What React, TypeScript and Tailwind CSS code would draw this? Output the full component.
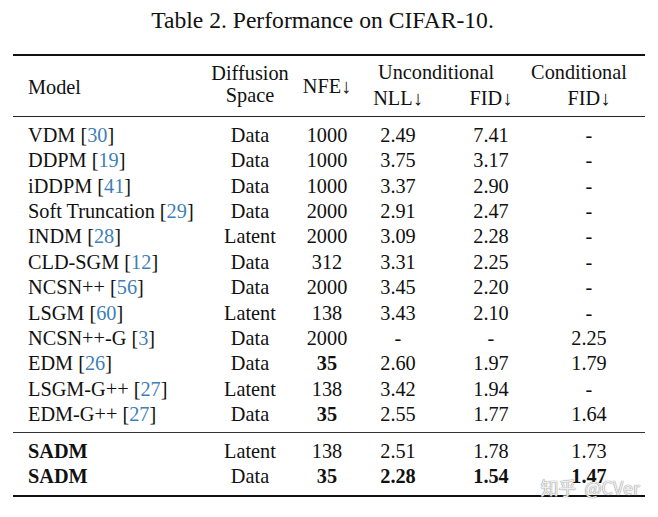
const ROWS: { name: string; ref: string; space: string; nfe: string; nfeBold?: boolean; nll: string; fid: string; cond: string }[] = [
  { name: "VDM", ref: "30", space: "Data", nfe: "1000", nll: "2.49", fid: "7.41", cond: "-" },
  { name: "DDPM", ref: "19", space: "Data", nfe: "1000", nll: "3.75", fid: "3.17", cond: "-" },
  { name: "iDDPM", ref: "41", space: "Data", nfe: "1000", nll: "3.37", fid: "2.90", cond: "-" },
  { name: "Soft Truncation", ref: "29", space: "Data", nfe: "2000", nll: "2.91", fid: "2.47", cond: "-" },
  { name: "INDM", ref: "28", space: "Latent", nfe: "2000", nll: "3.09", fid: "2.28", cond: "-" },
  { name: "CLD-SGM", ref: "12", space: "Data", nfe: "312", nll: "3.31", fid: "2.25", cond: "-" },
  { name: "NCSN++", ref: "56", space: "Data", nfe: "2000", nll: "3.45", fid: "2.20", cond: "-" },
  { name: "LSGM", ref: "60", space: "Latent", nfe: "138", nll: "3.43", fid: "2.10", cond: "-" },
  { name: "NCSN++-G", ref: "3", space: "Data", nfe: "2000", nll: "-", fid: "-", cond: "2.25" },
  { name: "EDM", ref: "26", space: "Data", nfe: "35", nfeBold: true, nll: "2.60", fid: "1.97", cond: "1.79" },
  { name: "LSGM-G++", ref: "27", space: "Latent", nfe: "138", nll: "3.42", fid: "1.94", cond: "-" },
  { name: "EDM-G++", ref: "27", space: "Data", nfe: "35", nfeBold: true, nll: "2.55", fid: "1.77", cond: "1.64" },
];

const GRID = "grid grid-cols-[202px_70px_84px_58px_128px_68px] pr-[24px]";

export default function App() {
  return (
    <div className="w-[658px] h-[517px] bg-white text-[#111] font-['Liberation_Serif','Times_New_Roman',serif] overflow-hidden">
      <h1 className="pt-[5px] text-center text-[23.6px] leading-[30px] pr-[13px]">
        Table 2. Performance on CIFAR-10.
      </h1>

      <div className="mx-[13px] mt-[19px] border-t-2 border-b-2 border-[#111] text-[20.3px]">
        {/* header */}
        <div className={`${GRID} h-[61px] border-b border-[#222] leading-[22px]`}>
          <div className="pl-[15px] flex items-center pt-[2px]">Model</div>
          <div className="flex flex-col items-center justify-center whitespace-nowrap pb-[4px]">
            <span>Diffusion</span>
            <span>Space</span>
          </div>
          <div className="flex items-center justify-center whitespace-nowrap">NFE↓</div>
          <div className="col-span-2 flex flex-col justify-center pb-[2px]">
            <span className="pl-[9px] whitespace-nowrap">Unconditional</span>
            <div className="grid grid-cols-[58px_128px] mt-[4px]">
              <span className="text-center">NLL↓</span>
              <span className="text-center">FID↓</span>
            </div>
          </div>
          <div className="flex flex-col justify-center pb-[2px]">
            <span className="flex justify-center pr-[20px] whitespace-nowrap">Conditional</span>
            <span className="text-center mt-[4px]">FID↓</span>
          </div>
        </div>

        {/* baselines */}
        <div className="pt-[6px] pb-[5px] border-b border-[#333]">
          {ROWS.map((r, i) => (
            <div key={i} className={`${GRID} leading-[25.36px]`}>
              <div className="pl-[15px] whitespace-nowrap">
                {r.name} [<span className="text-[#3f7fb8]">{r.ref}</span>]
              </div>
              <div className="text-center">{r.space}</div>
              <div className={`text-center ${r.nfeBold ? "font-bold" : ""}`}>{r.nfe}</div>
              <div className="text-center">{r.nll}</div>
              <div className="text-center">{r.fid}</div>
              <div className="text-center">{r.cond}</div>
            </div>
          ))}
        </div>

        {/* ours */}
        <div className="pt-[6px] pb-[6px] relative">
          <div className={`${GRID} leading-[25px]`}>
            <div className="pl-[15px] font-bold">SADM</div>
            <div className="text-center">Latent</div>
            <div className="text-center">138</div>
            <div className="text-center">2.51</div>
            <div className="text-center">1.78</div>
            <div className="text-center">1.73</div>
          </div>
          <div className={`${GRID} leading-[25px] font-bold`}>
            <div className="pl-[15px]">SADM</div>
            <div className="text-center font-normal">Data</div>
            <div className="text-center">35</div>
            <div className="text-center">2.28</div>
            <div className="text-center">1.54</div>
            <div className="text-center">1.47</div>
          </div>
          <div className="absolute right-[5px] bottom-[-2px] text-[18px] leading-[20px] font-['Noto_Sans_CJK_SC','Liberation_Sans',sans-serif] text-white/85 [text-shadow:0_0_1px_#888,0_0_1px_#888] whitespace-nowrap">
            知乎 <span className="ml-[4px]">@CVer</span>
          </div>
        </div>
      </div>
    </div>
  );
}
